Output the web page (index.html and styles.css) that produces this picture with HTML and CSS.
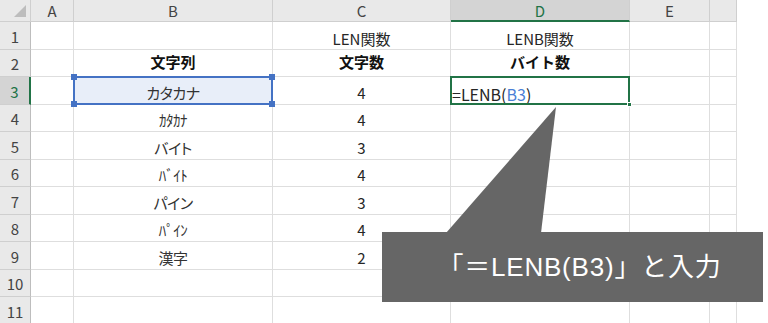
FILE: index.html
```html
<!DOCTYPE html>
<html lang="ja">
   <head>
      <meta charset="UTF-8">
      <meta name="viewport" content="width=device-width, initial-scale=1.0">
      <title>LENB関数</title>
      <link rel="stylesheet" href="styles.css">
   </head>

   <body>
      <div class="page">
         <div class="sheet">

            <!------------------COLUMN HEADERS---------------->
            <div class="hd corner"><span class="corner-mark"></span></div>
            <div class="hd col">A</div>
            <div class="hd col">B</div>
            <div class="hd col">C</div>
            <div class="hd col col-on">D</div>
            <div class="hd col">E</div>
            <div class="hd col"></div>

            <!------------------ROW 1---------------->
            <div class="hd row">1</div>
            <div class="cell"></div>
            <div class="cell"></div>
            <div class="cell low">LEN関数</div>
            <div class="cell low">LENB関数</div>
            <div class="cell"></div>
            <div class="cell"></div>

            <!------------------ROW 2---------------->
            <div class="hd row">2</div>
            <div class="cell"></div>
            <div class="cell bold">文字列</div>
            <div class="cell bold">文字数</div>
            <div class="cell bold">バイト数</div>
            <div class="cell"></div>
            <div class="cell"></div>

            <!------------------ROW 3---------------->
            <div class="hd row row-on">3</div>
            <div class="cell"></div>
            <div class="cell text range">
               カタカナ
               <span class="handle tl"></span>
               <span class="handle tr"></span>
               <span class="handle bl"></span>
               <span class="handle br"></span>
            </div>
            <div class="cell num">4</div>
            <div class="cell formula active">=LENB(<span class="ref">B3</span>)<span class="fill"></span></div>
            <div class="cell"></div>
            <div class="cell"></div>

            <!------------------ROW 4---------------->
            <div class="hd row">4</div>
            <div class="cell"></div>
            <div class="cell text">ｶﾀｶﾅ</div>
            <div class="cell num">4</div>
            <div class="cell"></div>
            <div class="cell"></div>
            <div class="cell"></div>

            <!------------------ROW 5---------------->
            <div class="hd row">5</div>
            <div class="cell"></div>
            <div class="cell text">バイト</div>
            <div class="cell num">3</div>
            <div class="cell"></div>
            <div class="cell"></div>
            <div class="cell"></div>

            <!------------------ROW 6---------------->
            <div class="hd row">6</div>
            <div class="cell"></div>
            <div class="cell text">ﾊﾞｲﾄ</div>
            <div class="cell num">4</div>
            <div class="cell"></div>
            <div class="cell"></div>
            <div class="cell"></div>

            <!------------------ROW 7---------------->
            <div class="hd row">7</div>
            <div class="cell"></div>
            <div class="cell text">パイン</div>
            <div class="cell num">3</div>
            <div class="cell"></div>
            <div class="cell"></div>
            <div class="cell"></div>

            <!------------------ROW 8---------------->
            <div class="hd row">8</div>
            <div class="cell"></div>
            <div class="cell text">ﾊﾟｲﾝ</div>
            <div class="cell num">4</div>
            <div class="cell"></div>
            <div class="cell"></div>
            <div class="cell"></div>

            <!------------------ROW 9---------------->
            <div class="hd row">9</div>
            <div class="cell"></div>
            <div class="cell text">漢字</div>
            <div class="cell num">2</div>
            <div class="cell"></div>
            <div class="cell"></div>
            <div class="cell"></div>

            <!------------------ROW 10-11---------------->
            <div class="hd row">10</div>
            <div class="cell"></div>
            <div class="cell"></div>
            <div class="cell"></div>
            <div class="cell"></div>
            <div class="cell"></div>
            <div class="cell"></div>

            <div class="hd row">11</div>
            <div class="cell"></div>
            <div class="cell"></div>
            <div class="cell"></div>
            <div class="cell"></div>
            <div class="cell"></div>
            <div class="cell"></div>
         </div>

         <!------------------CALLOUT---------------->
         <svg class="tail" width="120" height="130" viewBox="0 0 120 130">
            <polygon points="0,126 95,126 110,0" fill="#666666"/>
         </svg>
         <div class="callout">「＝LENB(B3)」と入力</div>
      </div>
   </body>
</html>
```

FILE: styles.css
```css
*{
   box-sizing: border-box;
   margin: 0;
   padding: 0;
}

body{
   width: 768px;
   height: 323px;
   overflow: hidden;
   background: #fff;
   font-family: "Noto Sans CJK JP", "Noto Sans", sans-serif;
   color: #262626;
}

.page{
   position: relative;
   width: 768px;
   height: 323px;
}

.sheet{
   display: grid;
   width: 737px;
   grid-template-columns: 31px 43px 199px 178px 179px 80px 27px;
   grid-template-rows: 22px repeat(11, 27.5px);
}

/**************HEADERS************/
.hd{
   display: flex;
   align-items: center;
   justify-content: center;
   background: #e9e9e9;
   border-right: 1px solid #cfcfcf;
   border-bottom: 1px solid #cfcfcf;
   font-size: 15px;
   line-height: 18px;
   color: #444;
}

.corner{
   position: relative;
}

.corner-mark{
   position: absolute;
   right: 4px;
   bottom: 4px;
   width: 0;
   height: 0;
   border-left: 12px solid transparent;
   border-bottom: 12px solid #bdbdbd;
}

.col{
   padding-top: 1px;
}

.row{
   padding-top: 3px;
   border-right-color: #bdbdbd;
}

.col-on{
   background: #d4d4d4;
   color: #217346;
   border-bottom: 2px solid #217346;
}

.row-on{
   background: #d4d4d4;
   color: #217346;
   border-right: 2px solid #217346;
}

/**************CELLS************/
.cell{
   display: flex;
   align-items: flex-end;
   justify-content: center;
   border-right: 1px solid #dedede;
   border-bottom: 1px solid #dedede;
   font-size: 15px;
   line-height: 18px;
   padding-bottom: 3px;
   white-space: nowrap;
}

.low{
   padding-bottom: 1px;
}

.bold{
   font-weight: bold;
   color: #111;
   padding-bottom: 5px;
}

.text{
   padding-bottom: 2px;
   font-feature-settings: "palt";
   letter-spacing: -0.5px;
   color: #333;
}

.num{
   padding-bottom: 2px;
}

.formula{
   justify-content: flex-start;
   padding-left: 1px;
   padding-bottom: 1px;
   font-size: 16px;
}

.ref{
   color: #4a7fd6;
}

/**************SELECTIONS************/
.range{
   position: relative;
   background: #e8eef9;
}

.range::after{
   content: "";
   position: absolute;
   top: -1px;
   left: -1px;
   right: -1px;
   bottom: -1px;
   border: 2px solid #4472c4;
}

.handle{
   position: absolute;
   width: 6px;
   height: 6px;
   background: #4472c4;
   z-index: 1;
}

.tl{ top: -3px; left: -3px; }
.tr{ top: -3px; right: -3px; }
.bl{ bottom: -3px; left: -3px; }
.br{ bottom: -3px; right: -3px; }

.active{
   position: relative;
}

.active::after{
   content: "";
   position: absolute;
   top: -1px;
   left: -1px;
   right: -1px;
   bottom: -1px;
   border: 2px solid #217346;
}

.fill{
   position: absolute;
   right: -3px;
   bottom: -3px;
   width: 5px;
   height: 5px;
   background: #217346;
   border: 1px solid #fff;
   z-index: 1;
}

/**************CALLOUT************/
.callout{
   position: absolute;
   left: 382px;
   top: 232px;
   width: 381px;
   height: 70px;
   display: flex;
   align-items: center;
   justify-content: center;
   padding-left: 14px;
   padding-bottom: 5px;
   background: #666666;
   color: #fff;
   font-family: "Liberation Sans", "Noto Sans CJK JP", sans-serif;
   font-size: 26px;
   letter-spacing: 0.8px;
}

.tail{
   position: absolute;
   left: 446px;
   top: 107px;
}
```
